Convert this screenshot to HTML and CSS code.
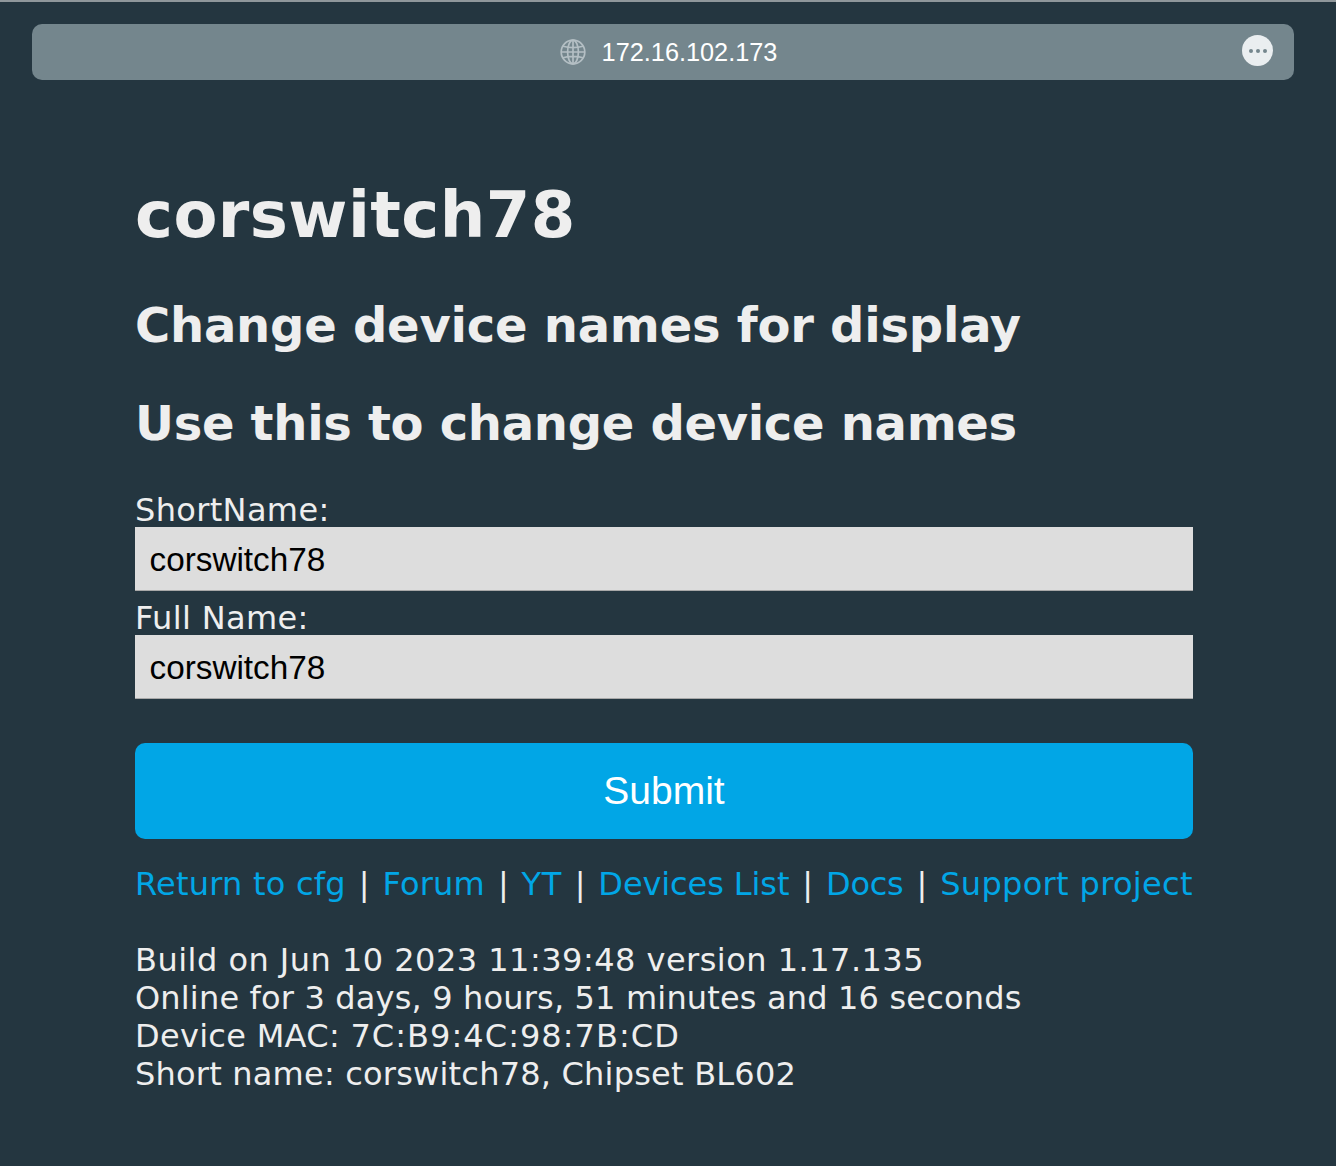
FILE: index.html
```html
<!DOCTYPE html>
<html lang="en">
<head>
<meta charset="utf-8">
<title>corswitch78</title>
<link rel="stylesheet" href="styles.css">
</head>
<body>
<div class="topline"></div>
<div class="addressbar">
  <div class="address">
    <svg class="globe" viewBox="0 0 26 26" fill="none" stroke="#b4bfc4" stroke-width="1.7">
      <circle cx="13" cy="13" r="11.8"/>
      <ellipse cx="13" cy="13" rx="5.4" ry="11.8"/>
      <path d="M13 1.2V24.8M1.2 13H24.8M3 7.3C9 8.9 17 8.9 23 7.3M3 18.7C9 17.1 17 17.1 23 18.7"/>
    </svg>
    <span class="ip">172.16.102.173</span>
  </div>
  <div class="more"><span class="dot"></span><span class="dot"></span><span class="dot"></span></div>
</div>
<main class="content">
  <h1>corswitch78</h1>
  <h2>Change device names for display</h2>
  <h2 class="second">Use this to change device names</h2>
  <form class="form">
    <label class="label" for="short">ShortName:</label>
    <input class="field" id="short" type="text" value="corswitch78">
    <label class="label" for="full">Full Name:</label>
    <input class="field" id="full" type="text" value="corswitch78">
    <button class="submit" type="button">Submit</button>
  </form>
  <nav class="links">
    <a class="link-return" href="#">Return to cfg</a><span>|</span><a class="link-forum" href="#">Forum</a><span>|</span><a class="link-yt" href="#">YT</a><span>|</span><a class="link-devices" href="#">Devices List</a><span>|</span><a class="link-docs" href="#">Docs</a><span>|</span><a class="link-support" href="#">Support project</a>
  </nav>
  <div class="info">
    <div class="line-build">Build on Jun 10 2023 11:39:48 version 1.17.135</div>
    <div class="line-online">Online for 3 days, 9 hours, 51 minutes and 16 seconds</div>
    <div class="line-mac">Device MAC: <span class="mac-value">7C:B9:4C:98:7B:CD</span></div>
    <div class="line-short">Short name: corswitch78, Chipset BL602</div>
  </div>
</main>
</body>
</html>
```
FILE: styles.css
```css
* { box-sizing: border-box; }
html, body { margin: 0; height: 100%; }
body {
  background: #243640;
  color: #eeeeee;
  font-family: "DejaVu Sans", Verdana, sans-serif;
  font-size: 32px;
  line-height: 38px;
  overflow: hidden;
}
.topline { height: 2px; background: #8f979b; }
.addressbar {
  margin: 22px 42px 0 32px;
  height: 56px;
  border-radius: 10px;
  background: #74868d;
  display: flex;
  align-items: center;
  justify-content: center;
  position: relative;
}
.address { display: flex; align-items: center; gap: 16px; margin-left: 11px; }
.globe { width: 26px; height: 26px; display: block; }
.ip {
  font-family: "Liberation Sans", Arial, sans-serif;
  font-size: 25.3px;
  line-height: 32px;
  color: #ffffff;
}
.more {
  position: absolute;
  right: 21px;
  top: 11px;
  width: 31px;
  height: 31px;
  border-radius: 50%;
  background: #eaeef0;
  display: flex;
  align-items: center;
  justify-content: center;
  gap: 3px;
}
.dot { width: 4px; height: 4px; border-radius: 50%; background: #74868d; }
.content { margin: 0 143px 0 135px; padding-top: 98px; }
h1 { margin: 0; font-size: 64px; line-height: 74px; font-weight: 700; letter-spacing: 0.45px; }
h2 { margin: 45px 0 0; font-size: 48px; line-height: 56px; font-weight: 700; letter-spacing: -0.23px; }
h2.second { margin-top: 42px; letter-spacing: -0.3px; }
.form { margin-top: 39px; display: flex; flex-direction: column; }
.label { display: block; height: 37px; line-height: 40px; letter-spacing: 0.35px; }
.field {
  display: block;
  width: 100%;
  height: 64px;
  margin: 0 0 7px;
  padding: 2px 14.5px 0;
  border: 0;
  border-bottom: 1px solid #a8a8a8;
  border-radius: 0;
  background: #dddddd;
  color: #000000;
  font-family: "Liberation Sans", Arial, sans-serif;
  font-size: 33.3px;
  outline: none;
}
.submit {
  margin-top: 37px;
  width: 100%;
  height: 96px;
  border: 0;
  border-radius: 10px;
  background: #01a6e6;
  color: #ffffff;
  font-family: "Liberation Sans", Arial, sans-serif;
  font-size: 39px;
}
.links { margin-top: 26px; display: flex; justify-content: space-between; }
.links a { color: #01a6e6; text-decoration: none; }
.link-return { letter-spacing: 0.23px; }
.link-forum { letter-spacing: 0.2px; }
.link-yt { letter-spacing: 0.5px; }
.link-devices { letter-spacing: -0.1px; }
.link-docs { letter-spacing: -0.25px; }
.link-support { letter-spacing: 0.33px; }
.info { margin-top: 38px; }
.line-build { letter-spacing: 0.48px; }
.line-online { letter-spacing: 0.17px; }
.line-mac { letter-spacing: 0.3px; }
.mac-value { letter-spacing: 1.05px; }
.line-short { letter-spacing: 0.21px; }
```
